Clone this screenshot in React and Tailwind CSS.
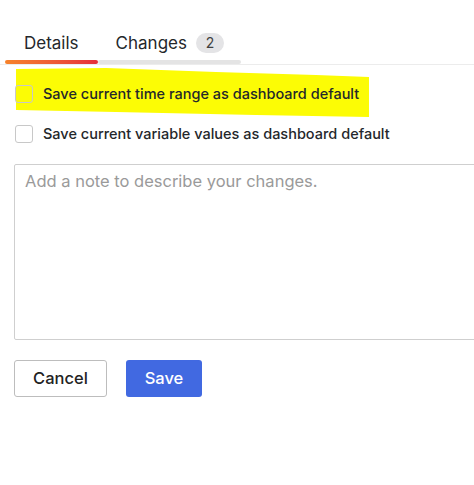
import React from 'react';

const CheckRow = ({ label }) => (
  <label className="flex items-center h-[18px] gap-[10px]">
    <span className="w-[18px] h-[18px] rounded-[3px] border border-[#c8c8c8] bg-transparent shrink-0" />
    <span className="text-[14.5px] font-medium text-[#24272b] leading-[18px] whitespace-nowrap">{label}</span>
  </label>
);

const App = () => {
  return (
    <div className="relative w-[474px] h-[485px] bg-white overflow-hidden" style={{ fontFamily: 'Inter, "Noto Sans", sans-serif' }}>
      {/* highlighter mark */}
      <div className="absolute left-[16px] top-[68px] w-[353px] h-[49px] bg-[#fcfc05] [clip-path:polygon(0_1px,90px_0,200px_4px,300px_7px,353px_9px,353px_49px,240px_47px,100px_44px,0_42px)]" />

      {/* tabs */}
      <div className="flex border-b border-[#ececec] pl-[5px]">
        <div className="flex flex-col">
          <div className="px-[19px] pt-[31px] pb-[5px] text-[17px] leading-[24px] text-[#24272b]">Details</div>
          <div className="h-[4px] rounded-full bg-gradient-to-r from-[#f6822a] to-[#e52c3a]" />
        </div>
        <div className="flex flex-col">
          <div className="flex items-center gap-[9px] pl-[18px] pr-[17px] pt-[31px] pb-[5px]">
            <span className="text-[17px] leading-[24px] text-[#24272b]">Changes</span>
            <span className="w-[28px] h-[20px] rounded-full bg-[#e4e4e6] text-[14px] leading-[20px] text-center text-[#404040]">2</span>
          </div>
          <div className="h-[4px] rounded-full bg-[#e4e4e4]" />
        </div>
      </div>

      <div className="relative pl-[15px] pt-[20px] flex flex-col">
        <div className="flex flex-col gap-[22px]">
          <CheckRow label="Save current time range as dashboard default" />
          <CheckRow label="Save current variable values as dashboard default" />
        </div>

        <textarea
          className="mt-[21px] -ml-[1px] w-[480px] h-[176px] border border-[#cfcfcf] rounded-[2px] px-[10px] py-[4px] text-[16.5px] leading-[24px] text-[#24272b] placeholder:text-[#9a9a9a] resize-none outline-none"
          placeholder="Add a note to describe your changes."
        />

        <div className="flex gap-[19px] mt-[20px] -ml-[1px]">
          <button className="w-[93px] h-[37px] border border-[#bdbdbd] rounded-[3px] bg-white text-[16.5px] font-medium text-[#222]">Cancel</button>
          <button className="w-[76px] h-[37px] rounded-[3px] bg-[#4169e1] text-[16.5px] font-medium text-white">Save</button>
        </div>
      </div>
    </div>
  );
};

export default App;
